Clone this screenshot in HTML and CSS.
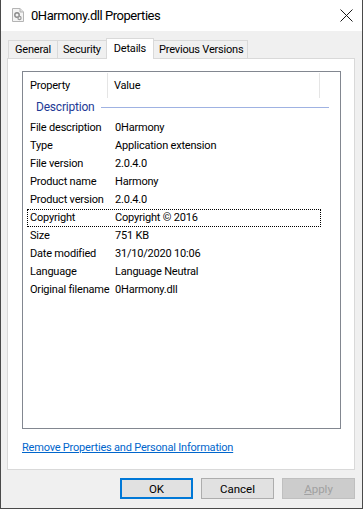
FILE: index.html
```html
<!DOCTYPE html>
<html lang="en">
<head>
    <meta charset="UTF-8">
    <title>0Harmony.dll Properties</title>
    <link rel="stylesheet" href="styles.css">
</head>
<body>
    <div class="window">
        <div class="titlebar">
            <svg class="file-icon" width="12" height="14" viewBox="0 0 12 14">
                <path d="M0.5 0.5 H8 L11.5 4 V13.5 H0.5 Z" fill="#f4f4f4" stroke="#b4b4b4"/>
                <path d="M8 0.5 V4 H11.5" fill="#e0e0e0" stroke="#b4b4b4"/>
                <circle cx="5" cy="7" r="2.2" fill="none" stroke="#8a8a8a" stroke-width="1.4"/>
                <circle cx="7.5" cy="10" r="1.6" fill="none" stroke="#9a9a9a" stroke-width="1.2"/>
            </svg>
            <span class="title">0Harmony.dll Properties</span>
            <svg class="close" width="13" height="13" viewBox="0 0 13 13">
                <path d="M0.5 0.5 L12.5 12.5 M12.5 0.5 L0.5 12.5" stroke="#1a1a1a" stroke-width="1"/>
            </svg>
        </div>
        <div class="content">
            <div class="tabs">
                <div class="tab">General</div>
                <div class="tab security">Security</div>
                <div class="tab active">Details</div>
                <div class="tab last">Previous Versions</div>
            </div>
            <div class="panel">
                <div class="listview">
                    <div class="lv-header">
                        <div class="col col-name">Property</div>
                        <div class="col col-value">Value</div>
                    </div>
                    <div class="group">
                        <span>Description</span>
                        <div class="group-line"></div>
                    </div>
                    <div class="row"><span>File description</span><span>0Harmony</span></div>
                    <div class="row"><span>Type</span><span>Application extension</span></div>
                    <div class="row"><span>File version</span><span>2.0.4.0</span></div>
                    <div class="row"><span>Product name</span><span>Harmony</span></div>
                    <div class="row"><span>Product version</span><span>2.0.4.0</span></div>
                    <div class="row focused"><span>Copyright</span><span>Copyright &copy; 2016</span></div>
                    <div class="row"><span>Size</span><span>751 KB</span></div>
                    <div class="row"><span>Date modified</span><span>31/10/2020 10:06</span></div>
                    <div class="row"><span>Language</span><span>Language Neutral</span></div>
                    <div class="row"><span>Original filename</span><span>0Harmony.dll</span></div>
                </div>
                <a class="link" href="#">Remove Properties and Personal Information</a>
            </div>
            <div class="buttons">
                <button class="btn default">OK</button>
                <button class="btn">Cancel</button>
                <button class="btn disabled"><u>A</u>pply</button>
            </div>
        </div>
    </div>
</body>
</html>
```

FILE: styles.css
```css
body {
    margin: 0;
    padding: 0;
    background-color: #f0f0f0;
    font-family: Roboto, "Liberation Sans", sans-serif;
    font-size: 11px;
    letter-spacing: -0.2px;
    color: #000;
}

.window {
    width: 363px;
    height: 509px;
    box-sizing: border-box;
    border: 1px solid #4a4a4a;
    border-top: none;
    background-color: #f0f0f0;
    display: flex;
    flex-direction: column;
}

.titlebar {
    height: 31px;
    background-color: #fff;
    display: flex;
    align-items: center;
    padding-left: 11px;
    padding-right: 9px;
}

.file-icon {
    margin-right: 7px;
    margin-top: -2px;
}

.title {
    font-size: 13px;
    letter-spacing: -0.45px;
    flex: 1;
    margin-top: -1px;
}

.close {
    margin-top: -1px;
}

.content {
    flex: 1;
    display: flex;
    flex-direction: column;
    padding: 7px 7px 0 6px;
}

.tabs {
    display: flex;
    height: 20px;
    padding-left: 1px;
    align-items: flex-end;
}

.tab {
    height: 18px;
    box-sizing: border-box;
    border: 1px solid #d9d9d9;
    border-bottom: none;
    border-right: none;
    background-color: #f0f0f0;
    padding: 1px 6px 0 6px;
    line-height: 16px;
    white-space: nowrap;
}

.tab.security {
    padding: 1px 5px 0 5px;
}

.tab.last {
    border-right: 1px solid #d9d9d9;
    padding: 1px 4px 0 5px;
}

.tab.active {
    height: 21px;
    background-color: #fff;
    border-right: 1px solid #d9d9d9;
    margin-bottom: -1px;
    position: relative;
    z-index: 1;
    padding: 1px 7px 0 7px;
    line-height: 17px;
}

.tab.active + .tab {
    border-left: none;
}

.panel {
    height: 412px;
    box-sizing: border-box;
    border: 1px solid #d9d9d9;
    background-color: #fff;
    padding: 12px 0 0 14px;
    display: flex;
    flex-direction: column;
}

.listview {
    width: 319px;
    height: 358px;
    box-sizing: border-box;
    border: 1px solid #828790;
}

.lv-header {
    display: flex;
    height: 25px;
    margin-top: 1px;
}

.col {
    line-height: 25px;
    box-sizing: border-box;
}

.col-name {
    width: 85px;
    padding-left: 7px;
    border-right: 1px solid #e5e5e5;
}

.col-value {
    width: 212px;
    padding-left: 6px;
    border-right: 1px solid #e5e5e5;
}

.group {
    display: flex;
    align-items: center;
    height: 18px;
    padding-left: 13px;
    color: #1e3a95;
    font-size: 12px;
}

.group-line {
    width: 228px;
    height: 1px;
    background-color: #9fb2e2;
    margin-left: 6px;
}

.row {
    display: flex;
    height: 18px;
    line-height: 18px;
    margin-left: 4px;
    width: 294px;
    box-sizing: border-box;
    padding-left: 3px;
    white-space: nowrap;
}

.row span:first-child {
    width: 85px;
    flex-shrink: 0;
}

.group + .row {
    margin-top: 3px;
}

.row.focused {
    border: 1px dotted #000;
    line-height: 16px;
    padding-left: 2px;
}

.link {
    margin-top: 12px;
    color: #0066cc;
    text-decoration: underline;
}

.buttons {
    display: flex;
    justify-content: flex-end;
    gap: 8px;
    padding-top: 8px;
}

.btn {
    width: 73px;
    height: 21px;
    box-sizing: border-box;
    border: 1px solid #adadad;
    background-color: #e1e1e1;
    font-family: Roboto, "Liberation Sans", sans-serif;
    font-size: 11.5px;
    color: #000;
    padding: 0;
}

.btn.default {
    border: 2px solid #0078d7;
}

.btn.disabled {
    background-color: #cccccc;
    border-color: #bfbfbf;
    color: #a0a0a0;
}
```
